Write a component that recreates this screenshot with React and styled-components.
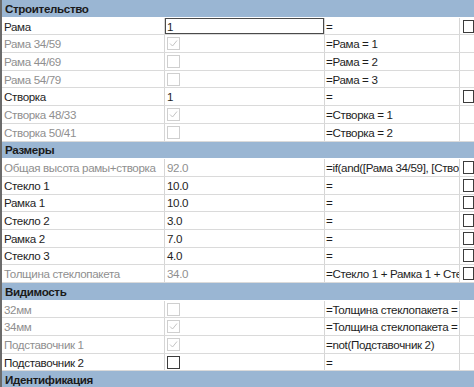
import React from 'react';
import styled, { createGlobalStyle, css } from 'styled-components';

// ── Global ───────────────────────────────────────────────────
const GlobalStyle = createGlobalStyle`
  html, body {
    margin: 0;
    padding: 0;
    background: #ffffff;
    overflow: hidden;
  }
  * { box-sizing: border-box; }
`;

// ── Styled Components ────────────────────────────────────────
const Grid = styled.div`
  width: 474px;
  height: 387px;
  overflow: hidden;
  border-left: 2px solid #6b6b6b;
  font-family: 'Liberation Sans', Arial, sans-serif;
  font-size: 11.6px;
  letter-spacing: -0.35px;
  color: #1e1e1e;
`;

const GroupHeader = styled.div`
  height: 17.7px;
  display: flex;
  align-items: center;
  padding-left: 3px;
  background: #9ab6d3;
  border-bottom: 1px solid #ffffff;
  font-weight: 700;
  color: #1a1a1a;
`;

const Row = styled.div`
  height: 17.7px;
  display: grid;
  grid-template-columns: 163px 160px 135px 1fr;
  border-bottom: 1px solid #dadada;
  background: #ffffff;
`;

const Cell = styled.div`
  position: relative;
  display: flex;
  align-items: center;
  padding-left: ${p => (p.$pad ?? 2)}px;
  border-right: 1px solid #d6d6d6;
  white-space: nowrap;
  overflow: hidden;
  color: ${p => (p.$muted ? '#8f8f8f' : '#1e1e1e')};

  &:last-child { border-right: none; }
`;

const Editor = styled.div`
  position: absolute;
  inset: -1px -1px -1px -1px;
  border: 2px solid #4a4a4a;
  pointer-events: none;
`;

const Box = styled.span`
  display: inline-flex;
  align-items: center;
  justify-content: center;
  width: 13px;
  height: 13px;
  background: #ffffff;
  border: 1px solid ${p => (p.$disabled ? '#cfcfcf' : '#3c3c3c')};
  ${p => p.$edge && css`margin-left: 3px;`}
`;

// ── Parts ────────────────────────────────────────────────────
const Check = ({ checked, disabled, edge }) => (
  <Box $disabled={disabled} $edge={edge}>
    {checked && (
      <svg width="9" height="9" viewBox="0 0 9 9">
        <polyline
          points="1,4.5 3.5,7 8,1.5"
          fill="none"
          stroke={disabled ? '#c4c4c4' : '#222'}
          strokeWidth="1"
        />
      </svg>
    )}
  </Box>
);

// ── Data ─────────────────────────────────────────────────────
const groups = [
  {
    title: 'Строительство',
    rows: [
      { label: 'Рама', value: '1', formula: '=', lock: true, editing: true },
      { label: 'Рама 34/59', check: true, muted: true, formula: '=Рама = 1' },
      { label: 'Рама 44/69', check: false, muted: true, formula: '=Рама = 2' },
      { label: 'Рама 54/79', check: false, muted: true, formula: '=Рама = 3' },
      { label: 'Створка', value: '1', formula: '=', lock: true },
      { label: 'Створка 48/33', check: true, muted: true, formula: '=Створка = 1' },
      { label: 'Створка 50/41', check: false, muted: true, formula: '=Створка = 2' },
    ],
  },
  {
    title: 'Размеры',
    rows: [
      { label: 'Общая высота рамы+створка', value: '92.0', muted: true, formula: '=if(and([Рама 34/59], [Створка 48/33]), 92, 0)', lock: true },
      { label: 'Стекло 1', value: '10.0', formula: '=', lock: true },
      { label: 'Рамка 1', value: '10.0', formula: '=', lock: true },
      { label: 'Стекло 2', value: '3.0', formula: '=', lock: true },
      { label: 'Рамка 2', value: '7.0', formula: '=', lock: true },
      { label: 'Стекло 3', value: '4.0', formula: '=', lock: true },
      { label: 'Толщина стеклопакета', value: '34.0', muted: true, formula: '=Стекло 1 + Рамка 1 + Стекло 2 + Рамка 2 + Стекло 3', lock: true },
    ],
  },
  {
    title: 'Видимость',
    rows: [
      { label: '32мм', check: false, muted: true, formula: '=Толщина стеклопакета = 32' },
      { label: '34мм', check: true, muted: true, formula: '=Толщина стеклопакета = 34' },
      { label: 'Подставочник 1', check: true, muted: true, formula: '=not(Подставочник 2)' },
      { label: 'Подставочник 2', check: false, formula: '=' },
    ],
  },
  { title: 'Идентификация', rows: [] },
];

// ── Component ────────────────────────────────────────────────
const ParamRow = ({ row }) => (
  <Row>
    <Cell $muted={row.muted}>{row.label}</Cell>
    <Cell $muted={row.muted && row.value}>
      {row.value !== undefined ? row.value : <Check checked={row.check} disabled={row.muted} />}
      {row.editing && <Editor />}
    </Cell>
    <Cell $pad={1}>{row.formula}</Cell>
    <Cell $pad={0}>{row.lock && <Check edge />}</Cell>
  </Row>
);

const App = () => (
  <>
    <GlobalStyle />
    <Grid>
      {groups.map(g => (
        <React.Fragment key={g.title}>
          <GroupHeader>{g.title}</GroupHeader>
          {g.rows.map(r => <ParamRow key={r.label} row={r} />)}
        </React.Fragment>
      ))}
    </Grid>
  </>
);

export default App;
